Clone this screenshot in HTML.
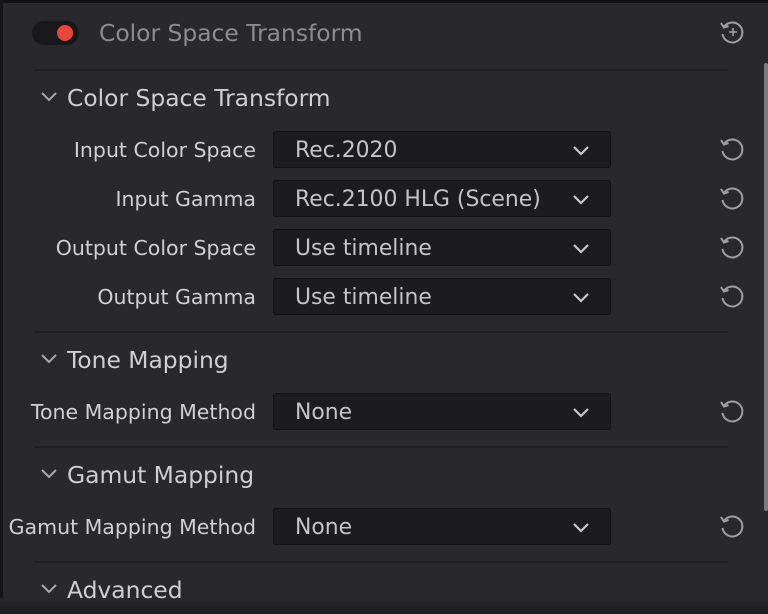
<!DOCTYPE html>
<html><head><style>
body{margin:0;width:768px;height:614px;overflow:hidden;background:#28282d;font-family:"DejaVu Sans","Liberation Sans",sans-serif;position:relative}
.a{position:absolute}
.sep{position:absolute;left:35px;width:693px;height:2px;background:#1f1f23}
.hdr{position:absolute;left:40px;font-size:23.4px;color:#cfcfd2;white-space:nowrap}
.hdr svg{vertical-align:middle;margin-right:9px;position:relative;top:-3px}
.lbl{position:absolute;right:512px;font-size:20.5px;color:#d0d0d3;white-space:nowrap}
.dd{position:absolute;left:273px;background:#1c1c1f;border:1px solid #121214;border-radius:3px;color:#c4c4c7;font-size:21.9px;line-height:37px;padding-left:21px;box-sizing:border-box;width:338px;height:37px}
.dd svg{position:absolute;right:20px;top:13px}
.rs{position:absolute;left:718px}
</style></head><body>
<div class="a" style="left:0;top:0;width:768px;height:3px;background:#111"></div>
<div class="a" style="left:0;top:0;width:3px;height:614px;background:#151517"></div>
<div class="a" style="left:764px;top:63px;width:4px;height:448px;background:#7a7a7e;border-radius:2px"></div>
<div class="a" style="left:0;top:598px;width:768px;height:16px;background:linear-gradient(#28282d,#1c1c20)"></div>
<div class="a" style="left:32px;top:21px;width:47px;height:24px;border-radius:12px;background:#18181a"></div>
<div class="a" style="left:57px;top:25px;width:16px;height:16px;border-radius:8px;background:#e8473d"></div>
<div class="a" style="left:99px;top:19px;font-size:23.4px;color:#8d8d91">Color Space Transform</div>
<svg class="a" style="left:718px;top:18px" width="28" height="28" viewBox="0 0 28 28" fill="none" stroke="#a0a0a4" stroke-width="2"><path d="M6 9 A10 10 0 1 1 4.5 16"/><path d="M3 5 L6 9.5 L10.5 8"/><path d="M15 10v8M11 14h8" stroke-width="1.6"/></svg>
<div class="sep" style="top:69px"></div>
<div class="hdr" style="top:84px"><svg width="18" height="12"><path d="M2 2l7 7 7-7" stroke="#a8a8ac" stroke-width="2" fill="none"/></svg>Color Space Transform</div>

<div class="lbl" style="top:138px">Input Color Space</div>
<div class="dd" style="top:131px">Rec.2020<svg width="18" height="12"><path d="M2 2l7 7 7-7" stroke="#c8c8cb" stroke-width="2.2" fill="none"/></svg></div>
<div class="lbl" style="top:187px">Input Gamma</div>
<div class="dd" style="top:180px">Rec.2100 HLG (Scene)<svg width="18" height="12"><path d="M2 2l7 7 7-7" stroke="#c8c8cb" stroke-width="2.2" fill="none"/></svg></div>
<div class="lbl" style="top:236px">Output Color Space</div>
<div class="dd" style="top:229px">Use timeline<svg width="18" height="12"><path d="M2 2l7 7 7-7" stroke="#c8c8cb" stroke-width="2.2" fill="none"/></svg></div>
<div class="lbl" style="top:285px">Output Gamma</div>
<div class="dd" style="top:278px">Use timeline<svg width="18" height="12"><path d="M2 2l7 7 7-7" stroke="#c8c8cb" stroke-width="2.2" fill="none"/></svg></div>

<div class="sep" style="top:331px"></div>
<div class="hdr" style="top:346px"><svg width="18" height="12"><path d="M2 2l7 7 7-7" stroke="#a8a8ac" stroke-width="2" fill="none"/></svg>Tone Mapping</div>
<div class="lbl" style="top:400px">Tone Mapping Method</div>
<div class="dd" style="top:393px">None<svg width="18" height="12"><path d="M2 2l7 7 7-7" stroke="#c8c8cb" stroke-width="2.2" fill="none"/></svg></div>
<div class="sep" style="top:446px"></div>
<div class="hdr" style="top:461px"><svg width="18" height="12"><path d="M2 2l7 7 7-7" stroke="#a8a8ac" stroke-width="2" fill="none"/></svg>Gamut Mapping</div>
<div class="lbl" style="top:515px">Gamut Mapping Method</div>
<div class="dd" style="top:508px">None<svg width="18" height="12"><path d="M2 2l7 7 7-7" stroke="#c8c8cb" stroke-width="2.2" fill="none"/></svg></div>
<div class="sep" style="top:561px"></div>
<div class="hdr" style="top:576px"><svg width="18" height="12"><path d="M2 2l7 7 7-7" stroke="#a8a8ac" stroke-width="2" fill="none"/></svg>Advanced</div>

<svg class="rs" style="top:135px" width="28" height="28" viewBox="0 0 28 28" fill="none" stroke="#a0a0a4" stroke-width="2"><path d="M6 9 A10 10 0 1 1 4.5 16"/><path d="M3 5 L6 9.5 L10.5 8"/></svg>
<svg class="rs" style="top:184px" width="28" height="28" viewBox="0 0 28 28" fill="none" stroke="#a0a0a4" stroke-width="2"><path d="M6 9 A10 10 0 1 1 4.5 16"/><path d="M3 5 L6 9.5 L10.5 8"/></svg>
<svg class="rs" style="top:233px" width="28" height="28" viewBox="0 0 28 28" fill="none" stroke="#a0a0a4" stroke-width="2"><path d="M6 9 A10 10 0 1 1 4.5 16"/><path d="M3 5 L6 9.5 L10.5 8"/></svg>
<svg class="rs" style="top:282px" width="28" height="28" viewBox="0 0 28 28" fill="none" stroke="#a0a0a4" stroke-width="2"><path d="M6 9 A10 10 0 1 1 4.5 16"/><path d="M3 5 L6 9.5 L10.5 8"/></svg>
<svg class="rs" style="top:397px" width="28" height="28" viewBox="0 0 28 28" fill="none" stroke="#a0a0a4" stroke-width="2"><path d="M6 9 A10 10 0 1 1 4.5 16"/><path d="M3 5 L6 9.5 L10.5 8"/></svg>
<svg class="rs" style="top:512px" width="28" height="28" viewBox="0 0 28 28" fill="none" stroke="#a0a0a4" stroke-width="2"><path d="M6 9 A10 10 0 1 1 4.5 16"/><path d="M3 5 L6 9.5 L10.5 8"/></svg>
</body></html>
